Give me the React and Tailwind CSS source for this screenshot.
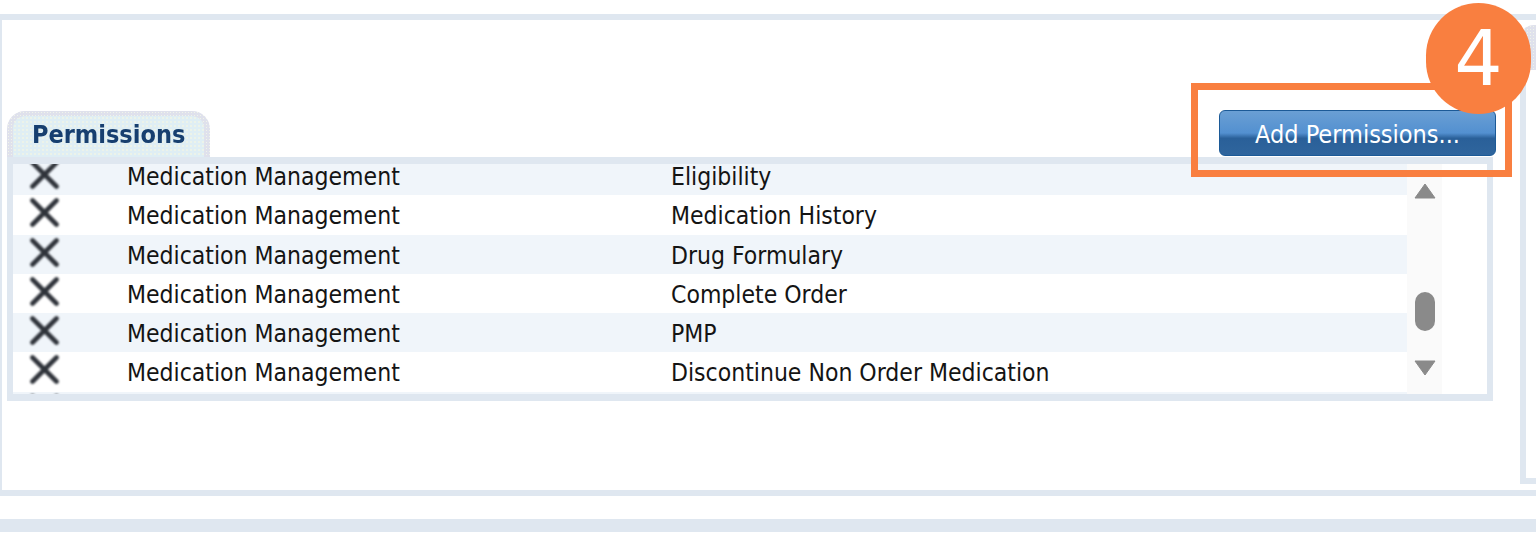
const rows = [
  ["Medication Management", "Medication History"],
  ["Medication Management", "Drug Formulary"],
  ["Medication Management", "Complete Order"],
  ["Medication Management", "PMP"],
  ["Medication Management", "Discontinue Non Order Medication"],
];

function XIcon({ className }) {
  return (
    <svg viewBox="0 0 31 31" className={className}>
      <path d="M3.5 3.5 L27.5 27.5" stroke="#2f333a" strokeWidth="4.6" strokeLinecap="round" />
      <path d="M27.5 3.5 L3.5 27.5" stroke="#2f333a" strokeWidth="4.6" strokeLinecap="round" />
    </svg>
  );
}

export default function App() {
  return (
    <div className="relative h-[537px] w-[1536px] overflow-hidden bg-white pt-[14px] font-['DejaVu_Sans',sans-serif] [font-stretch:condensed]">
      <div className="flex h-[482px] border-y-[6px] border-l-2 border-[#dfe7f0]">
        <div className="flex w-[1518px] shrink-0 flex-col pl-[5px] pt-[91px]">
          <div className="flex h-[46px] w-[1486px] items-end justify-between">
            <div className="h-[46px] w-[203px] rounded-t-[18px] bg-[#dfe1ec] bg-[radial-gradient(#f0f4ea_35%,transparent_40%)] bg-[length:3px_3px] px-[6px] pt-[5px] blur-[0.3px]">
              <div className="flex h-full items-center rounded-t-[12px] bg-[#dfeef4] bg-[radial-gradient(#ecf3ea_35%,transparent_40%)] bg-[length:4px_4px] pl-[19px] text-[25px] font-bold text-[#173f6f]">
                <span className="pb-[3px]">Permissions</span>
              </div>
            </div>
            <div className="mb-[1px] mr-[-3px] flex h-[46px] w-[277px] items-center justify-center rounded-[6px] border border-[#1c5a97] bg-[linear-gradient(#6a9fd4_0%,#5390d0_50%,#2a6099_62%,#2f659d_100%)] pt-[3px] text-[25px] text-white">
              Add Permissions...
            </div>
          </div>
          <div className="flex h-[244px] w-[1486px] border-[6px] border-t-[7px] border-b-[7px] border-[#dfe7f0]">
            <div className="w-[1394px]">
              <div className="flex h-[31.3px] items-start bg-[#f0f5fa] text-[24.5px] leading-[26px] text-[#141414]">
                <div className="flex h-[31px] w-[114px] shrink-0 overflow-hidden pl-[16px]">
                  <XIcon className="mt-[-5px] h-[31px] w-[31px] shrink-0 blur-[0.8px]" />
                </div>
                <div className="w-[544px] shrink-0">Medication Management</div>
                <div>Eligibility</div>
              </div>
              {rows.map((r, i) => (
                <div
                  key={r[1]}
                  className={`flex h-[39.3px] items-start ${i % 2 === 1 ? "bg-[#f0f5fa]" : "bg-white"} text-[24.5px] leading-[39.3px] text-[#141414]`}
                >
                  <div className="flex w-[114px] shrink-0 pl-[16px] pt-[2px]">
                    <XIcon className="h-[31px] w-[31px] blur-[0.8px]" />
                  </div>
                  <div className="w-[544px] shrink-0 pt-[1px]">{r[0]}</div>
                  <div className="pt-[1px]">{r[1]}</div>
                </div>
              ))}
              <div className="flex h-[2.2px] overflow-hidden bg-[#f0f5fa] pl-[16px]">
                <XIcon className="mt-[1px] h-[31px] w-[31px] shrink-0 blur-[0.8px]" />
              </div>
            </div>
            <div className="relative w-[35px] bg-[#fafafa]">
              <svg viewBox="0 0 22 16" className="absolute left-[7px] top-[19px] h-[16px] w-[22px]">
                <path d="M11 1 L21 15 L1 15 Z" fill="#8a8a8a" stroke="#8a8a8a" strokeLinejoin="round" />
              </svg>
              <div className="absolute left-[8px] top-[128px] h-[39px] w-[20px] rounded-full bg-[#8a8a8a]" />
              <svg viewBox="0 0 22 16" className="absolute left-[7px] top-[196px] h-[16px] w-[22px]">
                <path d="M1 1 L21 1 L11 15 Z" fill="#8a8a8a" stroke="#8a8a8a" strokeLinejoin="round" />
              </svg>
            </div>
          </div>
        </div>
        <div className="mt-[5px] mb-[6px] flex flex-1 flex-col">
          <div className="h-[45px] rounded-tl-[14px] bg-[#dfe1ec] bg-[radial-gradient(#f0f4ea_35%,transparent_40%)] bg-[length:3px_3px]" />
          <div className="flex-1 border-b-[6px] border-l-[6px] border-[#dfe7f0]" />
        </div>
      </div>
      <div className="mt-[23px] h-[13px] bg-[#dfe7f0]" />

      <div className="absolute left-[1191px] top-[83px] h-[94px] w-[321px] border-[7px] border-[#f97f40]" />
      <div className="absolute left-[1426px] top-[3px] flex h-[111px] w-[105px] items-center justify-center rounded-full bg-[#f97f40] text-[76px] leading-none text-white [font-stretch:normal]">
        4
      </div>
    </div>
  );
}
